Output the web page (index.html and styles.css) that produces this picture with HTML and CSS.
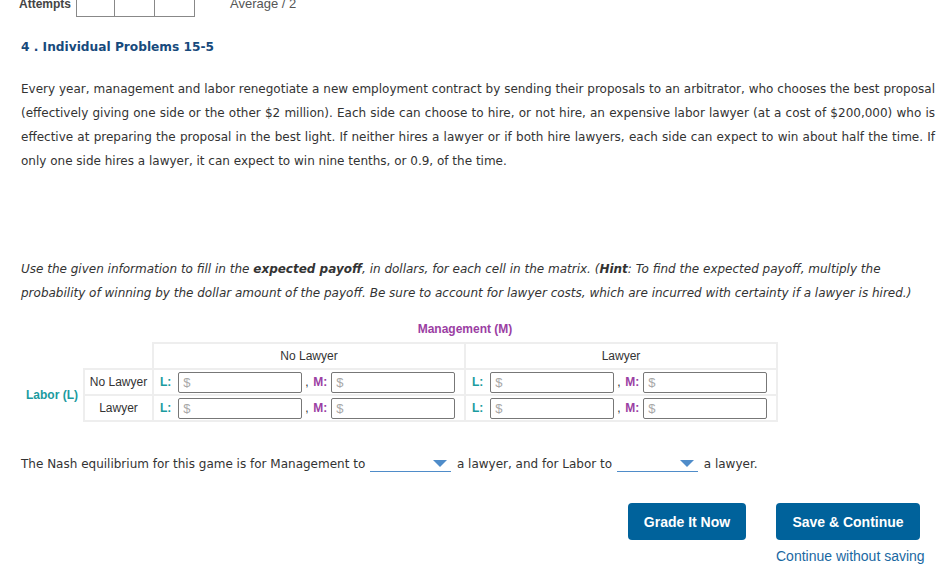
FILE: index.html
```html
<!DOCTYPE html>
<html>
<head>
<meta charset="utf-8">
<link rel="stylesheet" href="styles.css">
</head>
<body>
<div class="topbar">
  <span class="attempts">Attempts</span>
  <div class="boxes"><span class="box"></span><span class="box"></span><span class="box"></span></div>
  <span class="average">Average / 2</span>
</div>
<div class="content">
  <h2 class="title">4 . Individual Problems 15-5</h2>
  <p class="para">Every year, management and labor renegotiate a new employment contract by sending their proposals to an arbitrator, who chooses the best proposal (effectively giving one side or the other $2 million). Each side can choose to hire, or not hire, an expensive labor lawyer (at a cost of $200,000) who is effective at preparing the proposal in the best light. If neither hires a lawyer or if both hire lawyers, each side can expect to win about half the time. If only one side hires a lawyer, it can expect to win nine tenths, or 0.9, of the time.</p>
  <p class="instr">Use the given information to fill in the <b>expected payoff</b>, in dollars, for each cell in the matrix. (<b>Hint</b>: To find the expected payoff, multiply the probability of winning by the dollar amount of the payoff. Be sure to account for lawyer costs, which are incurred with certainty if a lawyer is hired.)</p>
  <table class="matrix">
    <colgroup><col class="c-labor"><col class="c-label"><col class="c-data"><col class="c-data"></colgroup>
    <tr class="mrow"><td class="blank"></td><td class="blank"></td><td class="mgmt" colspan="2">Management (M)</td></tr>
    <tr class="hrow"><td class="blank"></td><td class="corner"></td><td class="head">No Lawyer</td><td class="head">Lawyer</td></tr>
    <tr>
      <td class="labor" rowspan="2">Labor (L)</td>
      <td class="rlabel">No Lawyer</td>
      <td class="cell"><div class="pair"><span class="l">L:</span><input class="pay" placeholder="$"><span class="sep">,</span><span class="m">M:</span><input class="pay" placeholder="$"></div></td>
      <td class="cell"><div class="pair"><span class="l">L:</span><input class="pay" placeholder="$"><span class="sep">,</span><span class="m">M:</span><input class="pay" placeholder="$"></div></td>
    </tr>
    <tr>
      <td class="rlabel">Lawyer</td>
      <td class="cell"><div class="pair"><span class="l">L:</span><input class="pay" placeholder="$"><span class="sep">,</span><span class="m">M:</span><input class="pay" placeholder="$"></div></td>
      <td class="cell"><div class="pair"><span class="l">L:</span><input class="pay" placeholder="$"><span class="sep">,</span><span class="m">M:</span><input class="pay" placeholder="$"></div></td>
    </tr>
  </table>
  <p class="nash">The Nash equilibrium for this game is for Management to <span class="dd"><svg class="tri" width="14" height="8" viewBox="0 0 14 8"><path d="M0 0 H14 L7 7 Z" fill="#4f8cc9"/></svg></span> a lawyer, and for Labor to <span class="dd"><svg class="tri" width="14" height="8" viewBox="0 0 14 8"><path d="M0 0 H14 L7 7 Z" fill="#4f8cc9"/></svg></span> a lawyer.</p>
  <div class="actions">
    <button class="btn">Grade It Now</button>
    <div class="savecol">
      <button class="btn save">Save &amp; Continue</button>
      <a class="skip" href="#">Continue without saving</a>
    </div>
  </div>
</div>
</body>
</html>
```

FILE: styles.css
```css
* { box-sizing: border-box; }
body {
  margin: 0;
  background: #fff;
  color: #333;
  font-family: "DejaVu Sans", Verdana, sans-serif;
  overflow: hidden;
}
.topbar {
  display: flex;
  align-items: flex-end;
  margin-top: -10px;
  height: 27px;
  padding-left: 19px;
  font-family: "Liberation Sans", Arial, sans-serif;
}
.attempts {
  font-size: 12px;
  font-weight: bold;
  color: #444;
  line-height: 14px;
  margin-bottom: 6px;
  margin-right: 5px;
}
.boxes { display: flex; height: 27px; }
.box {
  width: 40px;
  height: 27px;
  border: 1px solid #888;
  border-left-width: 0;
}
.box:first-child { border-left-width: 1px; width: 39px; }
.average {
  font-size: 13px;
  color: #555;
  line-height: 14px;
  margin-left: 35px;
  margin-bottom: 6px;
}
.content {
  padding: 0 4px 0 21px;
}
.title {
  margin: 22px 0 0;
  font-size: 12.2px;
  line-height: 16px;
  font-weight: bold;
  color: #174a7c;
}
.para {
  margin: 22px 0 0;
  font-size: 12px;
  line-height: 24px;
  text-align: justify;
}
.instr {
  margin: 84px 0 0;
  font-size: 12px;
  line-height: 24px;
  font-style: italic;
}
.matrix {
  margin-top: 16px;
  border-collapse: collapse;
  table-layout: fixed;
  width: 756px;
  font-family: "Liberation Sans", Arial, sans-serif;
  font-size: 12px;
  color: #333;
}
.c-labor { width: 63px; }
.c-label { width: 69px; }
.c-data { width: 312px; }
.matrix td { padding: 0; }
.mrow td { height: 22px; vertical-align: top; }
.mgmt {
  text-align: center;
  color: #9b3ea3;
  font-weight: bold;
  line-height: 16px;
}
.hrow td { height: 26px; }
.head {
  border: 2px solid #eeeeee;
  text-align: center;
}
.labor {
  text-align: center;
  color: #1b9ba0;
  font-weight: bold;
  vertical-align: middle;
}
.rlabel {
  border: 2px solid #eeeeee;
  text-align: center;
  height: 26px;
}
.cell {
  border: 2px solid #eeeeee;
  height: 26px;
  padding-left: 6px !important;
}
.pair { display: flex; align-items: center; }
.l { color: #1b9ba0; font-weight: bold; margin-right: 7px; }
.m { color: #9b3ea3; font-weight: bold; margin-right: 4px; }
.sep { margin: 0 0 0 3px; width: 8px; }
.pay {
  width: 124px;
  height: 21px;
  border: 1px solid #777;
  border-radius: 2px;
  padding: 0 4px;
  margin: 0;
  font-family: "Liberation Sans", Arial, sans-serif;
  font-size: 13px;
  background: #fff;
}
.pay::placeholder { color: #a8a8a8; }
.nash {
  margin: 30px 0 0;
  font-size: 12px;
  line-height: 24px;
}
.dd {
  display: inline-block;
  width: 81px;
  height: 16px;
  border-bottom: 1px solid #4f8cc9;
  vertical-align: -4px;
  position: relative;
  margin: 0 2px 0 1px;
}
.tri { position: absolute; right: 4px; top: 4px; }
.actions {
  display: flex;
  justify-content: flex-end;
  gap: 30px;
  margin-top: 27px;
  padding-right: 10px;
}
.btn {
  background: #00629b;
  color: #fff;
  border: none;
  border-radius: 4px;
  height: 37px;
  padding: 0;
  width: 118px;
  font-family: "Liberation Sans", Arial, sans-serif;
  font-size: 14px;
  font-weight: bold;
}
.savecol { display: flex; flex-direction: column; width: 149px; }
.save { width: 144px; }
.skip {
  margin-top: 8px;
  color: #1a68a2;
  font-family: "Liberation Sans", Arial, sans-serif;
  font-size: 14px;
  line-height: 16px;
  text-decoration: none;
}
```
